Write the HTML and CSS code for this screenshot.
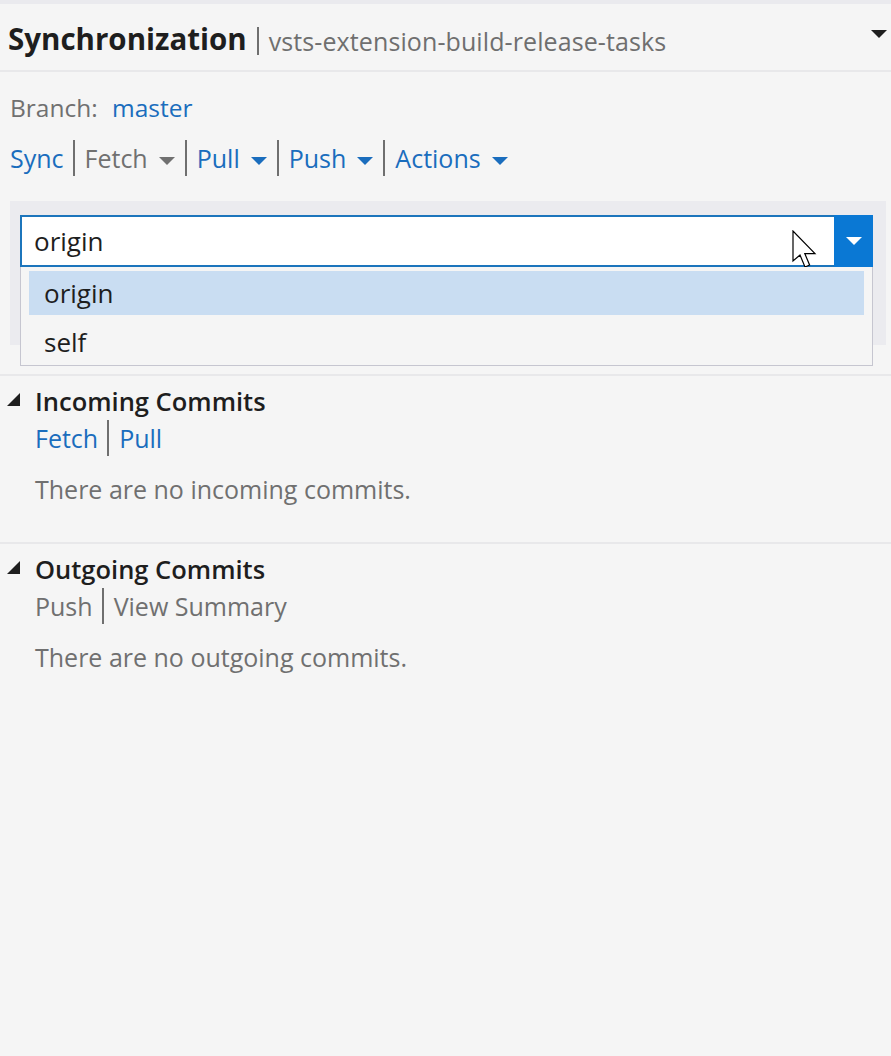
FILE: index.html
```html
<!DOCTYPE html>
<html lang="en">
<head>
  <meta charset="UTF-8">
  <title>Synchronization</title>
  <link rel="stylesheet" href="styles.css">
</head>
<body>
  <div class="panel">
    <div class="cabecera">
      <span class="titulo">Synchronization</span>
      <span class="sep-titulo"></span>
      <span class="repo">vsts-extension-build-release-tasks</span>
      <span class="menu-flecha"></span>
    </div>

    <div class="rama">
      <span class="etiqueta">Branch:</span>
      <span class="enlace">master</span>
    </div>

    <div class="acciones">
      <span class="enlace">Sync</span>
      <span class="barra"></span>
      <span class="gris">Fetch<i class="tri tri-gris"></i></span>
      <span class="barra"></span>
      <span class="enlace">Pull<i class="tri"></i></span>
      <span class="barra"></span>
      <span class="enlace">Push<i class="tri"></i></span>
      <span class="barra"></span>
      <span class="enlace">Actions<i class="tri"></i></span>
    </div>

    <div class="caja-remoto">
      <div class="combo">
        <div class="combo-texto">origin</div>
        <div class="combo-boton"><i class="tri tri-blanco"></i></div>
        <svg class="cursor" width="26" height="40" viewBox="0 0 13 20">
          <path d="M0.5 0.5 L0.5 15.5 L4 12.5 L6.5 18.5 L8.8 17.5 L6.4 11.8 L11.5 11.8 Z" fill="#fff" stroke="#000" stroke-width="0.6" stroke-linejoin="miter"/>
        </svg>
      </div>
      <div class="lista">
        <div class="opcion activa">origin</div>
        <div class="opcion">self</div>
      </div>
    </div>

    <div class="seccion">
      <div class="seccion-titulo"><i class="expandido"></i>Incoming Commits</div>
      <div class="seccion-links">
        <span class="enlace">Fetch</span>
        <span class="barra"></span>
        <span class="enlace">Pull</span>
      </div>
      <div class="vacio">There are no incoming commits.</div>
    </div>

    <div class="seccion">
      <div class="seccion-titulo"><i class="expandido"></i>Outgoing Commits</div>
      <div class="seccion-links">
        <span class="gris">Push</span>
        <span class="barra"></span>
        <span class="gris">View Summary</span>
      </div>
      <div class="vacio">There are no outgoing commits.</div>
    </div>
  </div>
</body>
</html>
```

FILE: styles.css
```css
html, body {
  margin: 0;
  padding: 0;
  height: 100%;
  background: #f5f5f5;
  font-family: "Open Sans", "Noto Sans", sans-serif;
  color: #1e1e1e;
}

.panel {
  border-top: 4px solid #eaeaee;
}

.cabecera {
  height: 68px;
  border-bottom: 2px solid #e8e8ea;
  display: flex;
  align-items: center;
  padding: 4px 8px 0 8px;
  box-sizing: border-box;
}

.titulo {
  font-size: 29.5px;
  font-weight: 700;
  color: #1e1e1e;
  line-height: 40px;
}

.sep-titulo {
  width: 2px;
  height: 28px;
  background: #6f6f6f;
  margin: 4px 10px 0 10px;
}

.repo {
  font-size: 25px;
  color: #6f6f6f;
  line-height: 40px;
  margin-top: 4px;
  letter-spacing: 0.1px;
}

.menu-flecha {
  margin-left: auto;
  margin-right: -4px;
  margin-top: -10px;
  width: 0;
  height: 0;
  border-left: 8px solid transparent;
  border-right: 8px solid transparent;
  border-top: 8px solid #1e1e1e;
}

.enlace { color: #1a6dbd; }
.gris { color: #707070; }

.rama {
  font-size: 24.5px;
  padding: 18px 10px 0;
  line-height: 36px;
}

.etiqueta {
  color: #707070;
  margin-right: 8px;
}

.acciones {
  display: flex;
  align-items: center;
  font-size: 25px;
  padding: 14px 10px 0;
  height: 36px;
}

.barra {
  width: 2px;
  height: 36px;
  background: #6f6f6f;
  margin: 0 10px 0 9px;
}

.tri {
  display: inline-block;
  width: 0;
  height: 0;
  border-left: 8.5px solid transparent;
  border-right: 8.5px solid transparent;
  border-top: 8px solid #1a6dbd;
  vertical-align: middle;
  margin-left: 11px;
  margin-right: 1px;
}

.tri-gris { border-top-color: #707070; }
.tri-blanco { border-top-color: #ffffff; margin: 0; }

.caja-remoto {
  margin: 25px 5px 0 10px;
  height: 144px;
  background: #ebebef;
  padding: 14px 13px 0 10px;
  box-sizing: border-box;
  position: relative;
}

.combo {
  display: flex;
  height: 52px;
  border: 2px solid #1c75bc;
  background: #fff;
  box-sizing: border-box;
  position: relative;
}

.combo-texto {
  flex: 1;
  font-size: 26px;
  padding-left: 12px;
  line-height: 48px;
  color: #1e1e1e;
}

.combo-boton {
  width: 39px;
  margin: -2px -2px -2px 0;
  background: #0a78d4;
  display: flex;
  align-items: center;
  justify-content: center;
}

.cursor {
  position: absolute;
  left: 770px;
  top: 13px;
}

.lista {
  position: absolute;
  left: 10px;
  right: 13px;
  top: 66px;
  height: 99px;
  background: #f5f5f5;
  border: 1px solid #c6c6d0;
  border-top: none;
  box-sizing: border-box;
  padding: 4px 8px 0 8px;
  z-index: 2;
}

.opcion {
  height: 44px;
  line-height: 44px;
  font-size: 26px;
  padding-left: 15px;
  color: #1e1e1e;
}

.opcion + .opcion { height: 50px; line-height: 54px; }

.opcion.activa { background: #c9ddf2; }

.seccion {
  border-top: 2px solid #e8e8ea;
  margin-top: 29px;
  padding: 10px 0 0 35px;
  height: 156px;
  position: relative;
}

.seccion + .seccion {
  margin-top: 0;
  height: auto;
}

.seccion-titulo {
  font-size: 25.5px;
  font-weight: 600;
  color: #1e1e1e;
  line-height: 30px;
}

.expandido {
  position: absolute;
  left: 7px;
  top: 17px;
  width: 0;
  height: 0;
  border-left: 13px solid transparent;
  border-bottom: 13px solid #1e1e1e;
}

.seccion-links {
  display: flex;
  align-items: center;
  font-size: 25px;
  height: 36px;
  margin-top: 4px;
}

.seccion-links .barra {
  margin: 0 10px 0 9px;
}

.vacio {
  font-size: 25px;
  color: #707070;
  margin-top: 15px;
  line-height: 36px;
}
```
